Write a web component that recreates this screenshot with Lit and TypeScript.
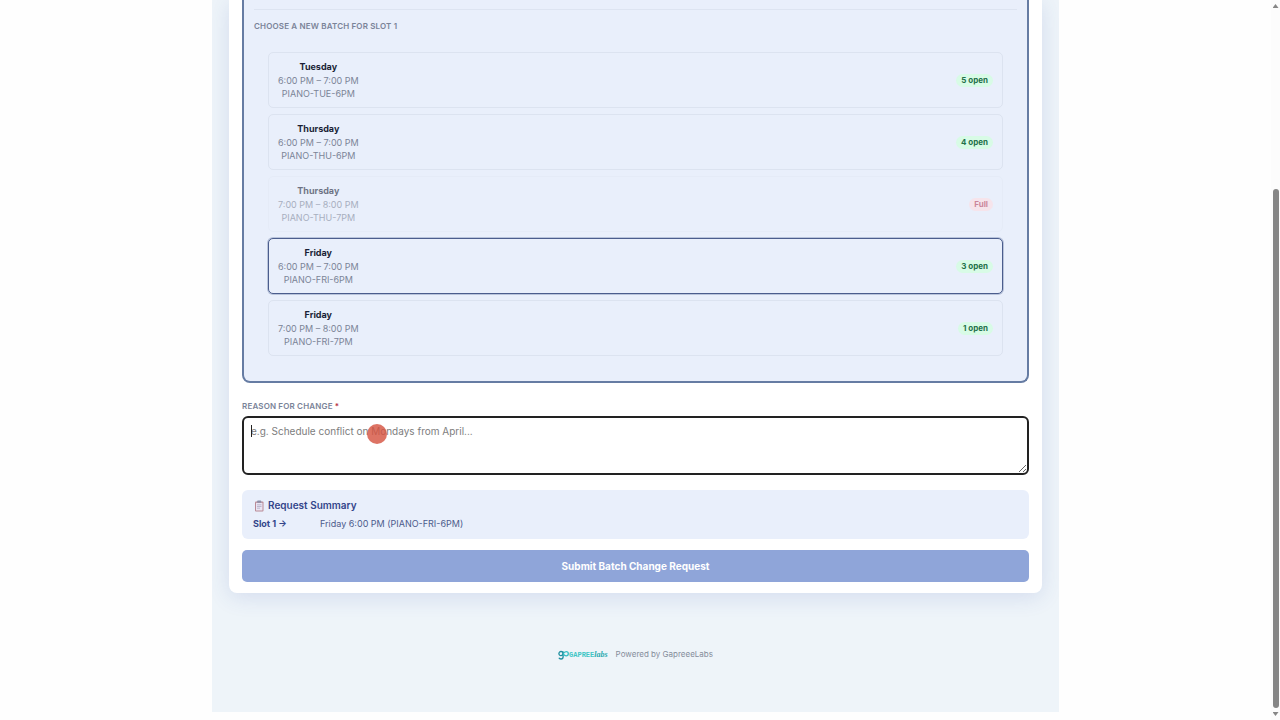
import { LitElement, html, css } from "lit";
import { customElement, property, state } from "lit/decorators.js";
import { classMap } from "lit/directives/class-map.js";

interface Batch {
  day: string;
  time: string;
  code: string;
  open: number;
}

const BATCHES: Batch[] = [
  { day: "Tuesday", time: "6:00 PM – 7:00 PM", code: "PIANO-TUE-6PM", open: 5 },
  { day: "Thursday", time: "6:00 PM – 7:00 PM", code: "PIANO-THU-6PM", open: 4 },
  { day: "Thursday", time: "7:00 PM – 8:00 PM", code: "PIANO-THU-7PM", open: 0 },
  { day: "Friday", time: "6:00 PM – 7:00 PM", code: "PIANO-FRI-6PM", open: 3 },
  { day: "Friday", time: "7:00 PM – 8:00 PM", code: "PIANO-FRI-7PM", open: 1 },
];

@customElement("batch-option")
export class BatchOption extends LitElement {
  @property({ attribute: false }) batch!: Batch;
  @property({ type: Boolean }) selected = false;

  static styles = css`
    :host {
      display: block;
    }
    .option {
      display: flex;
      align-items: center;
      justify-content: space-between;
      box-sizing: border-box;
      width: 100%;
      padding: 7px 9px;
      border: 1px solid #dce3f0;
      border-radius: 5px;
      background: #e9effb;
      font: 400 9px/13px Inter, sans-serif;
      color: #7b8497;
      text-align: center;
      cursor: pointer;
    }
    .option.selected {
      border-color: #4b5d8d;
      box-shadow: 0 0 0 1px rgba(75, 95, 145, 0.3);
    }
    .option:disabled {
      opacity: 0.6;
      border-color: #e4eaf6;
      cursor: default;
    }
    .info {
      display: grid;
    }
    .day {
      font-weight: 700;
      line-height: 14px;
      color: #1a1f36;
    }
    .badge {
      padding: 0 5px;
      border-radius: 7px;
      background: #d8fbe6;
      font-size: 8px;
      font-weight: 700;
      color: #23704a;
    }
    .badge.full {
      background: #ffdde2;
      color: #b8405a;
    }
  `;

  render() {
    const { day, time, code, open } = this.batch;
    return html`
      <button
        type="button"
        class=${classMap({ option: true, selected: this.selected })}
        aria-pressed=${this.selected ? "true" : "false"}
        ?disabled=${open === 0}
      >
        <span class="info">
          <span class="day">${day}</span>
          <span>${time}</span>
          <span>${code}</span>
        </span>
        <span class=${classMap({ badge: true, full: open === 0 })}>${open ? `${open} open` : "Full"}</span>
      </button>
    `;
  }
}

@customElement("brand-logo")
export class BrandLogo extends LitElement {
  static styles = css`
    :host {
      display: flex;
      align-items: center;
      height: 10px;
    }
    .mark {
      display: block;
      width: 11px;
      height: 10px;
    }
    .name {
      font: 700 7px/10px "Liberation Mono", monospace;
      color: #3fc6c6;
    }
    .labs {
      font: italic 700 8px/10px "Liberation Serif", serif;
      color: #2aa9b0;
    }
  `;

  render() {
    return html`
      <svg class="mark" viewBox="0 0 11 10" fill="none" stroke-width="1.3" aria-hidden="true">
        <circle cx="3" cy="3.6" r="2.1" stroke="#1f8fa0" />
        <path d="M5.1 1.5v5.3c0 1.4-.8 2.2-2.1 2.2-1 0-1.8-.5-2.1-1.2" stroke="#1f8fa0" />
        <path d="M5.2 3.8C6 2.3 7 1.6 8.2 1.6a2.1 2.1 0 0 1 0 4.2C7 5.8 6 5 5.2 3.8" stroke="#35bfc4" />
      </svg>
      <span class="name">GAPREE</span><span class="labs">labs</span>
    `;
  }
}

@customElement("page-scrollbar")
export class PageScrollbar extends LitElement {
  static styles = css`
    :host {
      display: grid;
      grid-template-rows: 12px 177fr 519fr 12px;
      justify-items: center;
      background: #fcfcfc;
    }
    .arrow {
      width: 6px;
      height: 4px;
      align-self: center;
      background: #868686;
    }
    .up {
      grid-row: 1;
      clip-path: polygon(50% 0, 100% 100%, 0 100%);
    }
    .down {
      grid-row: 4;
      clip-path: polygon(0 0, 100% 0, 50% 100%);
    }
    .thumb {
      grid-row: 3;
      width: 6px;
      border-radius: 3px;
      background: #868686;
    }
  `;

  render() {
    return html`
      <div class="arrow up"></div>
      <div class="thumb"></div>
      <div class="arrow down"></div>
    `;
  }
}

@customElement("app-root")
export class AppRoot extends LitElement {
  @state() private selected = 3;

  static styles = css`
    :host {
      display: grid;
      grid-template-columns: minmax(0, 1fr) 9px;
      height: 100vh;
      overflow: hidden;
      background: #fefefe;
      font: 400 9px/13px Inter, sans-serif;
      color: #1a1f36;
    }
    .page {
      display: flex;
      flex-direction: column;
      box-sizing: border-box;
      width: 100%;
      max-width: 847px;
      margin: 0 auto 8px;
      padding: 0 17px;
      overflow: hidden;
      background: #eef4f9;
    }
    .card {
      padding: 0 13px 11px;
      border-radius: 0 0 8px 8px;
      background: #fff;
      box-shadow: 0 4px 22px rgba(50, 75, 170, 0.14);
    }
    .slot {
      padding: 9px 10px 25px;
      border: 2px solid #667ca3;
      border-top: 0;
      border-radius: 0 0 8px 8px;
      background: #e9effb;
    }
    .caption {
      margin: 0;
      font-size: 8px;
      line-height: 12px;
      font-weight: 600;
      letter-spacing: 0.02em;
      text-transform: uppercase;
      color: #7a8398;
    }
    .slot .caption {
      padding-top: 10px;
      border-top: 1px solid #dde4f1;
    }
    .batches {
      display: grid;
      gap: 6px;
      margin: 0;
      padding: 20px 14px 0;
      list-style: none;
    }
    .reason {
      display: block;
      padding: 17px 0 4px;
    }
    .required {
      color: #b8304a;
    }
    .field {
      position: relative;
      display: flex;
    }
    .input {
      box-sizing: border-box;
      width: 100%;
      height: 59px;
      padding: 5px 7px;
      border: 2px solid #222;
      border-radius: 6px;
      outline: 0;
      background: #fff;
      font: 400 10px/16px Inter, sans-serif;
      color: #1a1f36;
      resize: vertical;
    }
    .input::placeholder {
      color: #7d7d7d;
    }
    .caret {
      position: absolute;
      left: 9px;
      top: 9px;
      width: 1px;
      height: 12px;
      background: #222;
    }
    .pointer {
      position: absolute;
      left: 125px;
      top: 8px;
      width: 20px;
      height: 20px;
      border-radius: 50%;
      background: rgba(214, 84, 66, 0.82);
      pointer-events: none;
    }
    .summary {
      margin-top: 15px;
      padding: 8px 11px;
      border-radius: 6px;
      background: #e9effb;
      color: #33458a;
    }
    .heading {
      display: flex;
      align-items: center;
      gap: 3px;
      margin: 0 0 4px;
      font-size: 10px;
      line-height: 15px;
      font-weight: 600;
    }
    .clipboard {
      width: 12px;
      height: 12px;
    }
    .line {
      display: grid;
      grid-template-columns: 57px 1fr;
      gap: 10px;
      margin: 0;
      line-height: 14px;
    }
    .line dt {
      font-weight: 700;
    }
    .line dd {
      margin: 0;
      color: #4c5b8c;
    }
    .submit {
      display: block;
      width: 100%;
      margin-top: 11px;
      padding: 8px;
      border: 0;
      border-radius: 5px;
      background: #8fa5d9;
      font: 700 10px/16px Inter, sans-serif;
      color: #fff;
    }
    .footer {
      display: flex;
      align-items: center;
      justify-content: center;
      gap: 8px;
      padding-top: 55px;
      font-size: 8px;
      color: #858d9b;
    }
  `;

  render() {
    const chosen = BATCHES[this.selected];
    return html`
      <main class="page">
        <form class="card" @submit=${(e: Event) => e.preventDefault()}>
          <section class="slot">
            <h2 class="caption">Choose a new batch for slot 1</h2>
            <ul class="batches">
              ${BATCHES.map(
                (batch, i) => html`<li>
                  <batch-option
                    .batch=${batch}
                    .selected=${i === this.selected}
                    @click=${() => {
                      if (batch.open) this.selected = i;
                    }}
                  ></batch-option>
                </li>`,
              )}
            </ul>
          </section>

          <label class="caption reason" for="reason">Reason for change <span class="required">*</span></label>
          <div class="field">
            <textarea class="input" id="reason" placeholder="e.g. Schedule conflict on Mondays from April..."></textarea>
            <span class="caret"></span>
            <span class="pointer"></span>
          </div>

          <section class="summary">
            <h3 class="heading">
              <svg class="clipboard" viewBox="0 0 12 12" aria-hidden="true">
                <rect x="2" y="1.5" width="8.5" height="10" rx="1" fill="#b98a96" />
                <rect x="3" y="2.8" width="6.5" height="7.7" fill="#e9e4f2" />
                <rect x="4.2" y=".6" width="4" height="2.2" rx=".6" fill="#8b8fa8" />
                <path d="M4 4.8h4.5M4 6.5h4.5M4 8.2h3" stroke="#a9a5c0" stroke-width=".7" />
              </svg>
              Request Summary
            </h3>
            <dl class="line">
              <dt>Slot 1 →</dt>
              <dd>${chosen.day} ${chosen.time.split(" – ")[0]} (${chosen.code})</dd>
            </dl>
          </section>

          <button class="submit" type="submit">Submit Batch Change Request</button>
        </form>

        <footer class="footer">
          <brand-logo></brand-logo>
          <span>Powered by GapreeeLabs</span>
        </footer>
      </main>
      <page-scrollbar aria-hidden="true"></page-scrollbar>
    `;
  }
}
